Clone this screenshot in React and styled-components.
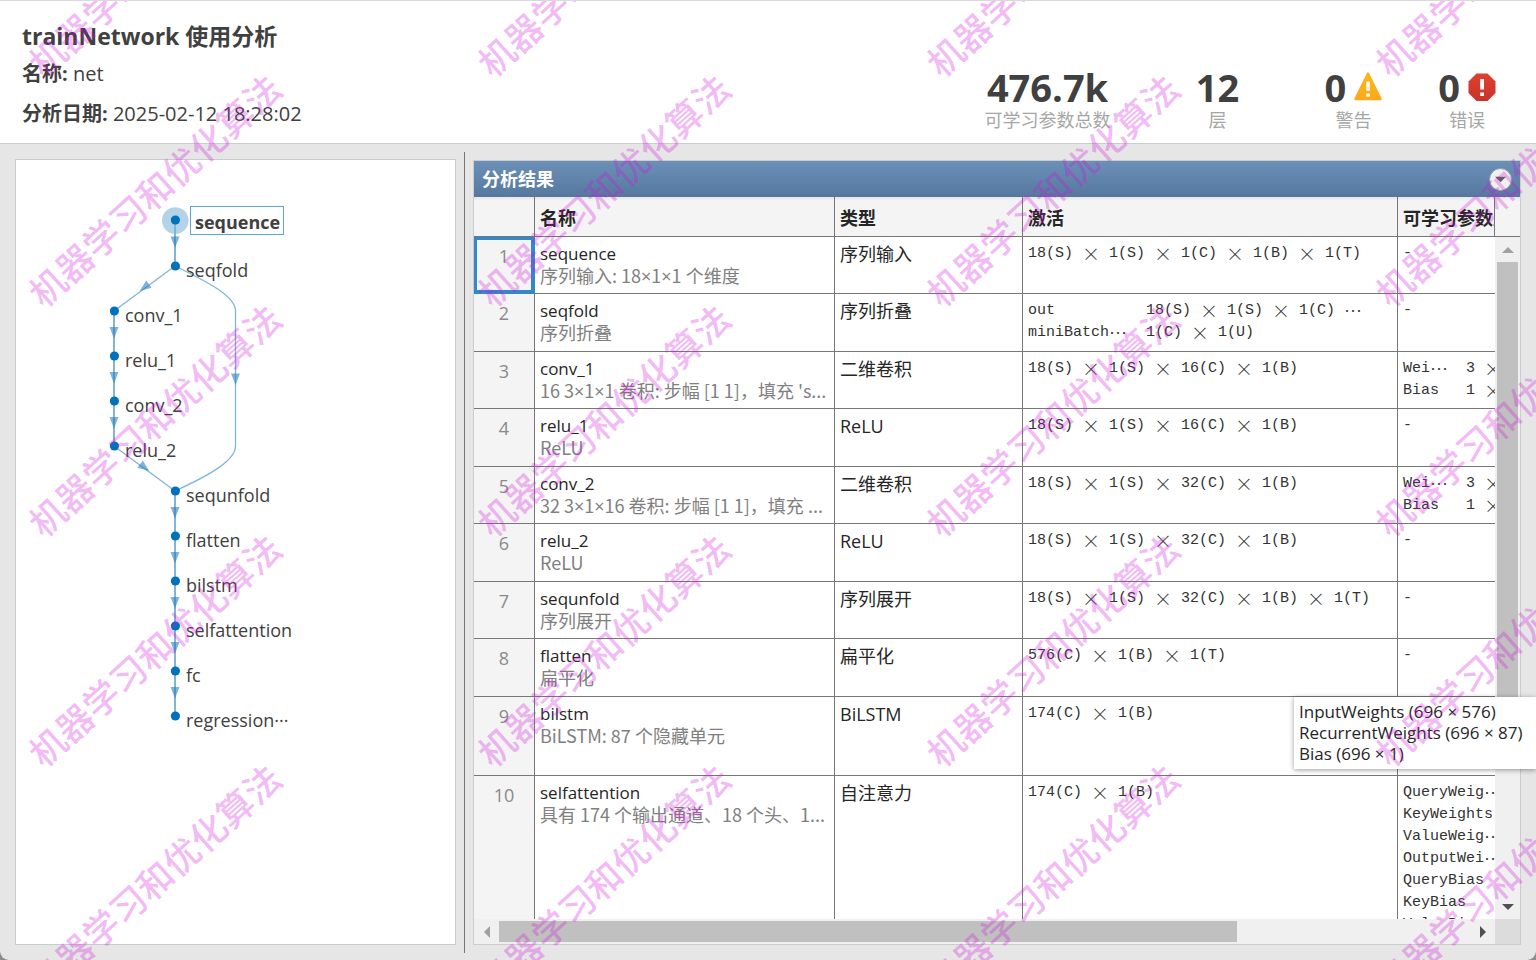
import React from "react";
import styled, { createGlobalStyle } from "styled-components";

const UI = `"Open Sans", "Noto Sans CJK SC", sans-serif`;
const CJK = `"Noto Sans CJK SC", "Open Sans", sans-serif`;
const MONO = `"Liberation Mono", "Noto Sans CJK SC", monospace`;

const GlobalStyle = createGlobalStyle`
  * { box-sizing: border-box; }
  body { margin: 0; background: #8c8c8c; }
  button { font: inherit; padding: 0; border: 0; background: none; }
`;

const Page = styled.div`
  position: relative;
  display: flex;
  flex-direction: column;
  height: 100vh;
  overflow: hidden;
  border-top: 1px solid #d9d9d9;
  border-radius: 0 0 9px 9px;
  background: #e6e6e6;
  color: #404040;
  font-family: ${UI};
`;

const Header = styled.header`
  display: flex;
  justify-content: space-between;
  align-items: flex-end;
  padding: 19px 40px 9px 22px;
  border-bottom: 1px solid #cccccc;
  background: #ffffff;
`;

const Title = styled.h1`
  margin: 0 0 2px;
  font-size: 23px;
  line-height: 32px;
  font-weight: 700;
`;

const Meta = styled.p`
  margin: 0;
  font-size: 20px;
  line-height: 40px;
`;

const Stats = styled.div`
  display: flex;
  gap: 56px;
  padding-bottom: 3px;
`;

const Stat = styled.div`
  display: flex;
  flex-direction: column;
  align-items: center;
  min-width: ${(p) => (p.$wide ? "102px" : "0")};
`;

const StatValue = styled.div`
  display: flex;
  align-items: center;
  gap: 8px;
  font-size: 38px;
  line-height: 44px;
  font-weight: 700;
`;

const StatLabel = styled.div`
  font-size: 18px;
  line-height: 22px;
  color: #a6a6a6;
`;

const Main = styled.main`
  flex: 1;
  min-height: 0;
  display: flex;
`;

const GraphPanel = styled.section`
  flex: 0 0 441px;
  margin: 15px 8px 15px 15px;
  border: 1px solid #c8cccc;
  background: #ffffff;
  overflow: hidden;
`;

const GraphText = styled.text`
  font-family: ${UI};
  font-size: 18px;
  font-weight: ${(p) => (p.$bold ? 700 : 400)};
  fill: #404040;
`;

const Divider = styled.div`
  width: 1px;
  margin: 8px 8px 7px 0;
  background: #777777;
`;

const ResultPanel = styled.section`
  flex: 1;
  min-width: 0;
  display: flex;
  flex-direction: column;
  margin: 16px 15px 15px 0;
  border: 1px solid #cccccc;
  background: #ffffff;
`;

const ResultBar = styled.div`
  display: flex;
  align-items: center;
  justify-content: space-between;
  height: 36px;
  flex: none;
  padding: 0 8px;
  background: linear-gradient(#6b90b7, #56789f);
  color: #ffffff;
`;

const ResultTitle = styled.h2`
  margin: 0;
  font-size: 18px;
  line-height: 24px;
  font-weight: 700;
`;

const MenuButton = styled.button`
  display: flex;
  align-items: center;
  justify-content: center;
  width: 23px;
  height: 23px;
  border: 1px solid #8f9aa5;
  border-radius: 50%;
  background: #f0f0f0;
`;

const ScrollFrame = styled.div`
  flex: 1;
  min-height: 0;
  display: grid;
  grid-template-columns: minmax(0, 1fr) 25px;
  grid-template-rows: minmax(0, 1fr) 25px;
`;

const TableClip = styled.div`
  overflow: hidden;
`;

const Table = styled.table`
  width: 100%;
  table-layout: fixed;
  border-collapse: separate;
  border-spacing: 0;
  color: #262626;
`;

const Col = styled.col`
  width: ${(p) => p.$w};
`;

const HeadCell = styled.th`
  height: 40px;
  padding: 2px 0 0 5px;
  border-right: 1px solid #777777;
  border-bottom: 1px solid #777777;
  background: linear-gradient(#e6e6e6, #f4f4f4 4px);
  text-align: left;
  font-size: 18px;
  line-height: 24px;
  font-weight: 700;
  white-space: nowrap;
  overflow: hidden;
`;

const Row = styled.tr`
  height: ${(p) => p.$h}px;
`;

const Cell = styled.td`
  padding: 6px 5px 0;
  border-right: 1px solid #777777;
  border-bottom: 1px solid #777777;
  vertical-align: top;
  font-size: 18px;
  line-height: 22px;
  white-space: nowrap;
  overflow: hidden;
  &:last-child {
    padding-right: 0;
    border-right: 0;
  }
`;

const NumberCell = styled(Cell)`
  padding-top: 8px;
  background: #f4f4f4;
  color: #8a8a8a;
  text-align: center;
  box-shadow: ${(p) => (p.$selected ? "inset 0 0 0 3px #3388cc" : "none")};
  border-color: ${(p) => (p.$selected ? "#3388cc" : "#777777")};
`;

const LayerName = styled.div`
  font-size: 17px;
`;

const LayerNote = styled.div`
  height: 22px;
  font-family: ${CJK};
  font-size: 18px;
  line-height: 20px;
  color: #808080;
`;

const Latin = styled.span`
  font-family: ${UI};
`;

const Mono = styled.div`
  font-family: ${MONO};
  font-size: 15px;
  color: #333333;
`;

const MonoLine = styled.div`
  height: 22px;
`;

const Pair = styled.div`
  display: grid;
  grid-template-columns: ${(p) => p.$w}px auto;
  height: 22px;
`;

const FullWidth = styled.span`
  display: inline-block;
  width: 18px;
  height: 22px;
  font-family: ${CJK};
  font-size: 18px;
  line-height: 20px;
  font-weight: 300;
  text-align: center;
  vertical-align: top;
`;

const VerticalSide = styled.div`
  display: flex;
  flex-direction: column;
`;

const HeadFiller = styled.div`
  height: 40px;
  flex: none;
  border-bottom: 1px solid #777777;
  background: linear-gradient(#e6e6e6, #f4f4f4 4px);
`;

const Track = styled.div`
  flex: 1;
  display: flex;
  flex-direction: ${(p) => (p.$vertical ? "column" : "row")};
  justify-content: space-between;
  background: #f0f0f0;
`;

const Rail = styled.div`
  flex: 1;
  display: flex;
  flex-direction: ${(p) => (p.$vertical ? "column" : "row")};
  padding: ${(p) => (p.$vertical ? "0 2px" : "2px 0")};
`;

const Thumb = styled.div`
  flex: 0 0 ${(p) => p.$size};
  background: #c0c0c0;
`;

const ArrowButton = styled.button`
  display: flex;
  align-items: center;
  justify-content: center;
  width: 25px;
  height: 25px;
`;

const Corner = styled.div`
  background: #dcdcdc;
`;

const Tooltip = styled.div`
  position: absolute;
  top: 696px;
  right: 0;
  width: 242px;
  padding: 4px 0 5px 5px;
  background: #ffffff;
  box-shadow: 0 1px 5px rgba(0, 0, 0, 0.4);
  color: #262626;
  font-size: 17px;
  line-height: 21px;
  white-space: nowrap;
`;

const WatermarkLayer = styled.div`
  position: absolute;
  inset: 0;
  overflow: hidden;
  pointer-events: none;
`;

const WatermarkGrid = styled.div`
  display: grid;
  grid-template-columns: repeat(4, 449px);
  grid-auto-rows: 230px;
  margin: -157px 0 0 -71px;
`;

const Watermark = styled.div`
  display: flex;
  align-items: center;
  justify-content: center;
  transform: rotate(-42deg);
  color: rgba(210, 16, 220, 0.3);
  font-family: ${CJK};
  font-size: 36px;
  line-height: 36px;
  font-weight: 500;
  white-space: nowrap;
`;

const nodes = [
  { name: "sequence", x: 175, y: 220, selected: true },
  { name: "seqfold", x: 175, y: 266 },
  { name: "conv_1", x: 114, y: 311 },
  { name: "relu_1", x: 114, y: 356 },
  { name: "conv_2", x: 114, y: 401 },
  { name: "relu_2", x: 114, y: 446 },
  { name: "sequnfold", x: 175, y: 491 },
  { name: "flatten", x: 175, y: 536 },
  { name: "bilstm", x: 175, y: 581 },
  { name: "selfattention", x: 175, y: 626 },
  { name: "fc", x: 175, y: 671 },
  { name: "regression···", x: 175, y: 716 },
];

const edges = [
  [0, 1], [1, 2], [2, 3], [3, 4], [4, 5], [5, 6],
  [6, 7], [7, 8], [8, 9], [9, 10], [10, 11],
];

function Arrow({ x, y, angle = 0 }) {
  return (
    <path
      d="M-4.5,-5.5 L4.5,-5.5 L0,6 Z"
      transform={`translate(${x} ${y}) rotate(${angle})`}
      fill="#2a80c2"
      fillOpacity="0.6"
    />
  );
}

function LayerGraph() {
  return (
    <svg width="439" height="600" viewBox="16 160 439 600" role="img" aria-label="net">
      <circle cx="175.3" cy="220.5" r="13.3" fill="#b3d3e9" />
      {edges.map(([a, b]) => {
        const p = nodes[a];
        const q = nodes[b];
        const angle = (Math.atan2(q.y - p.y, q.x - p.x) * 180) / Math.PI - 90;
        return (
          <g key={a}>
            <line x1={p.x} y1={p.y} x2={q.x} y2={q.y} stroke="#7fb5d9" strokeWidth={p.x === q.x ? 2 : 1.3} />
            <Arrow x={(p.x + q.x) / 2} y={(p.y + q.y) / 2 - 1} angle={angle} />
          </g>
        );
      })}
      <path
        d="M175,266 C212,284 235.500,297 235.500,311 L235.500,446 C235.500,460 212,474 175,491"
        fill="none"
        stroke="#7fb5d9"
        strokeWidth="1.3"
      />
      <Arrow x={235.5} y={379} />
      <rect x="190.500" y="206.500" width="93" height="28" fill="#ffffff" stroke="#5fa3d0" />
      {nodes.map((n) => (
        <g key={n.name}>
          <circle cx={n.x + 0.4} cy={n.y} r="4.600" fill="#0072bd" />
          <GraphText x={n.x + (n.selected ? 20 : 11)} y={n.y + (n.selected ? 9 : 11)} $bold={n.selected}>
            {n.name}
          </GraphText>
        </g>
      ))}
    </svg>
  );
}

function MonoText({ children }) {
  return children
    .split(/([×…])/)
    .map((part, i) => (part === "×" || part === "…" ? <FullWidth key={i}>{part}</FullWidth> : part));
}

function NoteText({ children }) {
  return children
    .split(/(×)/)
    .map((part, i) => (part === "×" ? <Latin key={i}>{part}</Latin> : part));
}

const convParams = [["Wei…", "3 ×"], ["Bias", "1 ×"]];

const layers = [
  { h: 57, name: "sequence", note: "序列输入: 18×1×1 个维度", type: "序列输入", act: "18(S) × 1(S) × 1(C) × 1(B) × 1(T)" },
  {
    h: 58, name: "seqfold", note: "序列折叠", type: "序列折叠",
    pairs: [["out", "18(S) × 1(S) × 1(C) …"], ["miniBatch…", "1(C) × 1(U)"]],
  },
  { h: 57, name: "conv_1", note: "16 3×1×1 卷积: 步幅 [1 1]，填充 's...", type: "二维卷积", act: "18(S) × 1(S) × 16(C) × 1(B)", params: convParams },
  { h: 58, name: "relu_1", note: "ReLU", type: "ReLU", act: "18(S) × 1(S) × 16(C) × 1(B)" },
  { h: 57, name: "conv_2", note: "32 3×1×16 卷积: 步幅 [1 1]，填充 ...", type: "二维卷积", act: "18(S) × 1(S) × 32(C) × 1(B)", params: convParams },
  { h: 58, name: "relu_2", note: "ReLU", type: "ReLU", act: "18(S) × 1(S) × 32(C) × 1(B)" },
  { h: 57, name: "sequnfold", note: "序列展开", type: "序列展开", act: "18(S) × 1(S) × 32(C) × 1(B) × 1(T)" },
  { h: 58, name: "flatten", note: "扁平化", type: "扁平化", act: "576(C) × 1(B) × 1(T)" },
  { h: 79, name: "bilstm", note: "BiLSTM: 87 个隐藏单元", type: "BiLSTM", act: "174(C) × 1(B)", params: [] },
  {
    h: 190, name: "selfattention", note: "具有 174 个输出通道、18 个头、1...", type: "自注意力", act: "174(C) × 1(B)",
    lines: ["QueryWeig…", "KeyWeights", "ValueWeig…", "OutputWei…", "QueryBias", "KeyBias", "ValueBias"],
  },
];

function ParamCell({ layer }) {
  if (layer.lines) {
    return layer.lines.map((l) => (
      <MonoLine key={l}><MonoText>{l}</MonoText></MonoLine>
    ));
  }
  if (layer.params) {
    return layer.params.map(([k, v]) => (
      <Pair key={k} $w={63}>
        <span><MonoText>{k}</MonoText></span>
        <span><MonoText>{v}</MonoText></span>
      </Pair>
    ));
  }
  return "-";
}

function Triangle({ points, fill, w = 12, h = 12 }) {
  return (
    <svg width={w} height={h} viewBox="0 0 12 12" aria-hidden="true">
      <polygon points={points} fill={fill} />
    </svg>
  );
}

function WarningIcon() {
  return (
    <svg width="28" height="30" viewBox="0 0 28 30" aria-hidden="true">
      <defs>
        <linearGradient id="warn" x1="0" y1="0" x2="0" y2="1">
          <stop offset="0" stopColor="#f7b81c" />
          <stop offset="1" stopColor="#fda91d" />
        </linearGradient>
      </defs>
      <path d="M14,1.500 L26.500,27 L1.500,27 Z" fill="url(#warn)" stroke="url(#warn)" strokeWidth="2.500" strokeLinejoin="round" />
      <path d="M12.200,9.500 h3.800 v9.500 h-3.800 z M12.200,21.500 h3.800 v3.300 h-3.800 z" fill="#fff6e0" />
    </svg>
  );
}

function ErrorIcon() {
  return (
    <svg width="28" height="30" viewBox="0 0 28 30" aria-hidden="true">
      <defs>
        <linearGradient id="err" x1="0" y1="0" x2="0" y2="1">
          <stop offset="0" stopColor="#e0402f" />
          <stop offset="1" stopColor="#c8332a" />
        </linearGradient>
      </defs>
      <polygon points="8.500,1.500 19.500,1.500 27.500,9.500 27.500,21 19.500,29 8.500,29 0.500,21 0.500,9.500" fill="url(#err)" />
      <path d="M12.200,7 h3.800 v10.500 h-3.800 z M12.200,20.500 h3.800 v3.500 h-3.800 z" fill="#ffffff" />
    </svg>
  );
}

export default function App() {
  return (
    <Page>
      <GlobalStyle />
      <Header>
        <div>
          <Title>trainNetwork 使用分析</Title>
          <Meta><b>名称:</b> net</Meta>
          <Meta><b>分析日期:</b> 2025-02-12 18:28:02</Meta>
        </div>
        <Stats>
          <Stat>
            <StatValue>476.7k</StatValue>
            <StatLabel>可学习参数总数</StatLabel>
          </Stat>
          <Stat $wide>
            <StatValue>12</StatValue>
            <StatLabel>层</StatLabel>
          </Stat>
          <Stat>
            <StatValue>0<WarningIcon /></StatValue>
            <StatLabel>警告</StatLabel>
          </Stat>
          <Stat>
            <StatValue>0<ErrorIcon /></StatValue>
            <StatLabel>错误</StatLabel>
          </Stat>
        </Stats>
      </Header>

      <Main>
        <GraphPanel>
          <LayerGraph />
        </GraphPanel>
        <Divider />
        <ResultPanel>
          <ResultBar>
            <ResultTitle>分析结果</ResultTitle>
            <MenuButton aria-label="菜单">
              <Triangle points="0,3 12,3 6,9" fill="#606060" w={11} h={11} />
            </MenuButton>
          </ResultBar>
          <ScrollFrame>
            <TableClip>
              <Table>
                <colgroup>
                  <Col $w="61px" />
                  <Col $w="300px" />
                  <Col $w="188px" />
                  <Col $w="375px" />
                  <Col $w="auto" />
                </colgroup>
                <thead>
                  <tr>
                    <HeadCell />
                    <HeadCell>名称</HeadCell>
                    <HeadCell>类型</HeadCell>
                    <HeadCell>激活</HeadCell>
                    <HeadCell>可学习参数属性</HeadCell>
                  </tr>
                </thead>
                <tbody>
                  {layers.map((layer, i) => (
                    <Row key={layer.name} $h={layer.h}>
                      <NumberCell $selected={i === 0}>{i + 1}</NumberCell>
                      <Cell>
                        <LayerName>{layer.name}</LayerName>
                        <LayerNote><NoteText>{layer.note}</NoteText></LayerNote>
                      </Cell>
                      <Cell>{layer.type}</Cell>
                      <Cell>
                        <Mono>
                          {layer.pairs ? (
                            layer.pairs.map(([k, v]) => (
                              <Pair key={k} $w={118}>
                                <span><MonoText>{k}</MonoText></span>
                                <span><MonoText>{v}</MonoText></span>
                              </Pair>
                            ))
                          ) : (
                            <MonoText>{layer.act}</MonoText>
                          )}
                        </Mono>
                      </Cell>
                      <Cell><Mono><ParamCell layer={layer} /></Mono></Cell>
                    </Row>
                  ))}
                </tbody>
              </Table>
            </TableClip>
            <VerticalSide>
              <HeadFiller />
              <Track $vertical>
                <ArrowButton aria-label="向上滚动"><Triangle points="0,9 12,9 6,3" fill="#a0a0a0" /></ArrowButton>
                <Rail $vertical><Thumb $size="80%" /></Rail>
                <ArrowButton aria-label="向下滚动"><Triangle points="0,3 12,3 6,9" fill="#505050" /></ArrowButton>
              </Track>
            </VerticalSide>
            <Track>
              <ArrowButton aria-label="向左滚动"><Triangle points="9,0 9,12 3,6" fill="#a0a0a0" /></ArrowButton>
              <Rail><Thumb $size="76%" /></Rail>
              <ArrowButton aria-label="向右滚动"><Triangle points="3,0 3,12 9,6" fill="#505050" /></ArrowButton>
            </Track>
            <Corner />
          </ScrollFrame>
        </ResultPanel>
      </Main>

      <Tooltip role="tooltip">
        <div>InputWeights (696 × 576)</div>
        <div>RecurrentWeights (696 × 87)</div>
        <div>Bias (696 × 1)</div>
      </Tooltip>

      <WatermarkLayer aria-hidden="true">
        <WatermarkGrid>
          {Array.from({ length: 20 }, (_, i) => (
            <Watermark key={i}>机器学习和优化算法</Watermark>
          ))}
        </WatermarkGrid>
      </WatermarkLayer>
    </Page>
  );
}
